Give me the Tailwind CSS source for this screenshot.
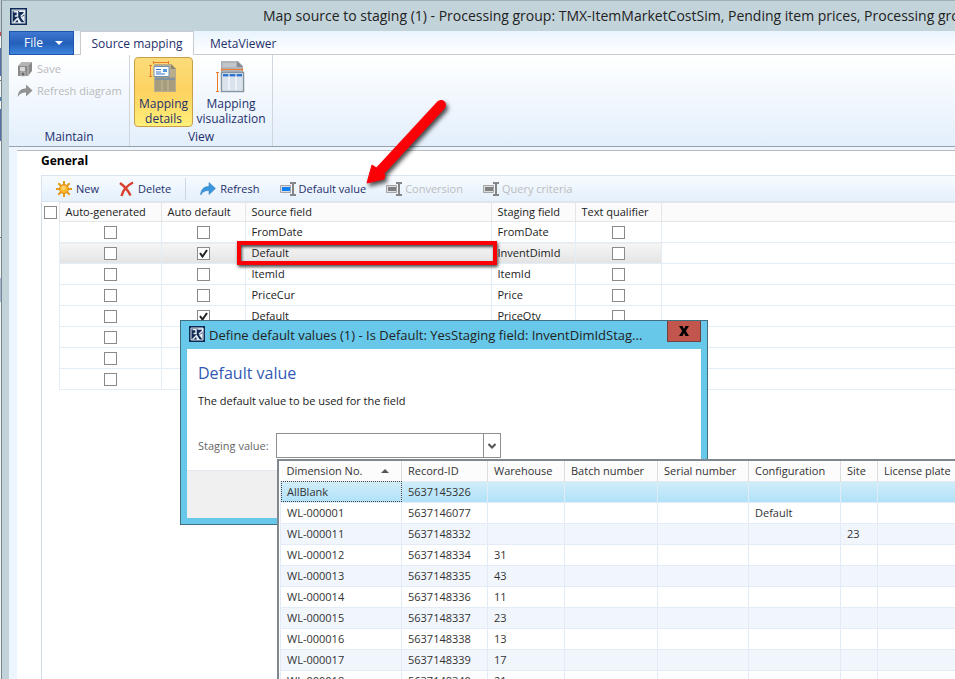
<!DOCTYPE html>
<html lang="en">
<head>
  <meta charset="UTF-8">
  <meta name="viewport" content="width=device-width, initial-scale=1.0">
  <title>Map source to staging (1)</title>
  <script src="https://cdn.jsdelivr.net/npm/@tailwindcss/browser@4"></script>
</head>
<body class="bg-white font-['Open_Sans','Noto_Sans',sans-serif] text-[11px] leading-4 text-[#222]">
  <!-- shared icons -->
  <svg class="hidden">
    <symbol id="appIcon" viewBox="0 0 16 16">
      <rect width="16" height="16" fill="#0f2a55"/>
      <path d="M2 2h12v12H2z" fill="#0f2a55" stroke="#dfe6ee"/>
      <path d="M3.500 3.500h3.500v4H4.500M8.500 3h5v2L10 8" fill="none" stroke="#e9eef4" stroke-width="1.500"/>
      <path d="M3 13l4.500-4.500L11 14H8L7 11l-3 3zM10 9l3.500-2v6.500z" fill="#e9eef4"/>
    </symbol>
    <symbol id="fieldIcon" viewBox="0 0 16 14">
      <path d="M.5 3.500h10v7H.5z" fill="#ddd" stroke="#a5a5a5"/>
      <path d="M2 5h8v4H2z" fill="currentColor"/>
      <path d="M10 1h2l1 1 1-1h2M13 2v10M10 13h2l1-1 1 1h2" fill="none" stroke="#858585" stroke-width="2"/>
    </symbol>
    <symbol id="turnArrow" viewBox="0 0 16 14">
      <path d="M.6 13C1 7 4 4.500 9 4.500V.5l6.500 6L9 12.500V8.600C5.500 8.500 3 9.500.6 13z"/>
    </symbol>
  </svg>

  <div class="relative flex h-screen overflow-hidden">
    <!-- edge of the window behind -->
    <div class="flex w-px shrink-0 flex-col bg-[#f4f4f4]">
      <div class="h-8 bg-[#c3cdd0]"></div>
      <div class="h-1 bg-[#c05060]"></div>
      <div class="h-3"></div>
      <div class="h-7 bg-[#5570ad]"></div>
      <div class="mt-1 h-px bg-[#777]"></div>
      <div class="mt-4 h-1 bg-[#4a7ab8]"></div>
      <div class="mt-2 h-8 bg-[#5570ad]"></div>
      <div class="mt-24 h-px bg-[#777]"></div>
      <div class="mt-10 h-6 bg-[#a9b5d0]"></div>
    </div>

    <div class="flex min-w-0 flex-1 flex-col border-t border-l border-t-[#9fb0b5] border-l-[#77888f] bg-[#c2d4da]">
      <!-- title bar -->
      <header class="flex h-[30px] shrink-0 items-center pl-2">
        <svg class="size-[17px] shrink-0"><use href="#appIcon"/></svg>
        <h1 class="ml-[236px] whitespace-nowrap text-sm">Map source to staging (1) - Processing group: TMX-ItemMarketCostSim, Pending item prices, Processing group</h1>
      </header>

      <div class="ml-[7px] flex min-h-0 flex-1 flex-col bg-[#edf5fe]">
        <!-- ribbon tabs -->
        <nav class="flex h-6 shrink-0 border-b border-[#c8ccd0] bg-linear-to-b from-[#e9f4fd] to-white text-xs text-[#1e2f6b]">
          <button class="flex h-6 w-[65px] items-center gap-3 border border-[#1f56ad] bg-linear-to-b from-[#3f78d0] via-[#2460bb] to-[#3d84dc] pl-3.5 text-white">File
            <svg class="h-1 w-2" viewBox="0 0 8 4"><path d="M0 0h8L4 4z" fill="#fff"/></svg>
          </button>
          <button class="ml-1.5 h-6 w-[114px] border-x border-t border-[#c8ccd0] bg-white pt-px">Source mapping</button>
          <button class="h-6 px-4 pt-0.5">MetaViewer</button>
        </nav>

        <!-- ribbon -->
        <div class="flex h-[92px] shrink-0 border-b border-[#98a0a8] bg-linear-to-b from-white to-[#e3effc] text-[#1e2f6b]">
          <section class="flex w-[121px] flex-col border-r border-[#cfd6de] pt-[3px]">
            <button disabled class="flex h-[22px] items-center gap-1 pl-2 text-[#b9b9b9]">
              <svg class="size-4" viewBox="0 0 16 16"><path d="M1 5l4-4h10v9l-4 5H1z" fill="#8a8a8a"/><path d="M5 1h10l-4 4H1z" fill="#b5b5b5"/><path d="M3 6h5v4H3z" fill="#d8d8d8"/><path d="M4 11h4v4H4zM11 5v10" fill="#666" stroke="#c5c5c5"/></svg>Save
            </button>
            <button disabled class="flex h-[22px] items-center gap-1 whitespace-nowrap pl-2 text-[#b9b9b9]">
              <svg class="h-3.5 w-4 shrink-0" fill="#929292"><use href="#turnArrow"/></svg>Refresh diagram
            </button>
            <h2 class="mt-auto pb-px text-center text-xs">Maintain</h2>
          </section>
          <section class="flex w-[143px] flex-col border-r border-[#cfd6de] pt-0.5">
            <div class="flex pl-1 text-xs leading-[15px]">
              <button class="flex h-[70px] w-[59px] flex-col items-center rounded-sm border border-[#c9a04a] bg-linear-to-b from-[#fbdc7a] via-[#fdd260] to-[#fff07a] pt-[3px] leading-[15px]">
                <svg class="mb-[3px] size-8 shrink-0" viewBox="0 0 32 32">
                  <path d="M6 3h17l5 5v23H6z" fill="#b9ad8c"/><path d="M23 3v5h5" fill="#8e876f"/>
                  <path d="M7 16h20v14H7z" fill="#a69d7e"/><path d="M7 17h20v2H7z" fill="#8192a0"/><path d="M14 19v11M20 19v11" stroke="#c4ba97"/>
                  <path d="M6 5.500h15v10H6z" fill="#fff" stroke="#6f90b5"/><path d="M15 8h4v3h-4z" fill="#5599e0"/><path d="M8 11h5M8 13h9M8 8.500h5" stroke="#2d74c8"/>
                  <path d="M5 1.500h16M5.500 0v3M20.500 0v3M2.500 4v12M1 4.500h3M1 15.500h3" stroke="#f07a30" fill="none"/>
                </svg>Mapping<br>details
              </button>
              <button class="flex h-[70px] w-[76px] flex-col items-center pt-1 leading-[15px]">
                <svg class="mb-[3px] size-8 shrink-0" viewBox="0 0 32 32">
                  <path d="M6 0h17l5 5v7H6z" fill="#aeb4b9"/><path d="M22 0v6h6" fill="#858b91"/><path d="M8 3h13M8 5h13" stroke="#d5d9dc"/>
                  <path d="M6.500 11.500h22v19h-22z" fill="#eaf0f5" stroke="#8795a3" stroke-width="1.500"/><path d="M8 13h19v2.500H8z" fill="#2e76cc"/><path d="M8 16h19v13H8z" fill="#dae3eb"/><path d="M14 13v16M21 13v16" stroke="#fff"/>
                  <path d="M6 8.500h22M6.500 7v3M27.500 7v3M2.500 11v19M1 11.500h3M1 30.500h3" stroke="#f07a30" fill="none"/>
                </svg>Mapping<br>visualization
              </button>
            </div>
            <h2 class="mt-auto pb-px text-center text-xs">View</h2>
          </section>
        </div>

        <main class="mt-[3px] ml-2 flex min-h-0 flex-1 flex-col border-t border-[#bbb] bg-white pl-6">
          <h2 class="h-6 shrink-0 text-xs leading-5 font-bold text-black">General</h2>

          <!-- grid toolbar -->
          <div class="flex h-[27px] shrink-0 items-center border-t border-b border-l border-[#dbe4f0] bg-linear-to-b from-[#f7fbff] to-[#e4f0fc] text-[#1e2f6b]">
            <button class="ml-3.5 flex items-center gap-1">
              <svg class="size-4" viewBox="0 0 16 16"><path d="M8 0v16M0 8h16M2.300 2.300l11.400 11.400M13.700 2.300L2.300 13.700" stroke="#e49a1c" stroke-width="2"/><circle cx="8" cy="8" r="4.500" fill="#fbb62c" stroke="#e08d12"/><circle cx="7.500" cy="7" r="2" fill="#ffd778"/></svg>New
            </button>
            <button class="ml-5 flex items-center gap-1">
              <svg class="h-4 w-[15px]" viewBox="0 0 15 16"><path d="M1 2c4 3 8 7 10.500 12.500M14 1.500C9 4 4 9 2.500 15" fill="none" stroke="#d8402c" stroke-width="2.500"/></svg>Delete
            </button>
            <div class="ml-3.5 h-[22px] w-px bg-[#ccd6e2]"></div>
            <button class="ml-3.5 flex items-center gap-1">
              <svg class="h-3.5 w-4" fill="#3b97dd" stroke="#2a77bd" stroke-width="0.5"><use href="#turnArrow"/></svg>Refresh
            </button>
            <button class="ml-5 flex items-center gap-[3px] whitespace-nowrap">
              <svg class="h-3.5 w-4 text-[#0a80f5]"><use href="#fieldIcon"/></svg>Default value
            </button>
            <button disabled class="ml-5 flex items-center gap-[3px] text-[#bcbcbc]">
              <svg class="h-3.5 w-4 text-[#808080]"><use href="#fieldIcon"/></svg>Conversion
            </button>
            <button disabled class="ml-5 flex items-center gap-[3px] whitespace-nowrap text-[#bcbcbc]">
              <svg class="h-3.5 w-4 text-[#808080]"><use href="#fieldIcon"/></svg>Query criteria
            </button>
          </div>

          <!-- mapping grid -->
          <div class="flex-1 border-l border-[#d0dcea]">
            <table class="w-full table-fixed border-collapse">
              <colgroup>
                <col class="w-[17px]"><col class="w-[102px]"><col class="w-[84px]"><col class="w-[246px]"><col class="w-[84px]"><col class="w-[86px]"><col>
              </colgroup>
              <thead>
                <tr class="h-[19px] bg-[#fbfbfb] text-left whitespace-nowrap">
                  <th class="bg-white p-0"><input type="checkbox" aria-label="Select all" class="mx-auto block size-[13px] appearance-none border border-[#8a8a8a] bg-white"></th>
                  <th class="border border-[#e6e6e6] p-0 pl-1.5 font-normal">Auto-generated</th>
                  <th class="border border-[#e6e6e6] p-0 pl-1.5 font-normal">Auto default</th>
                  <th class="border border-[#e6e6e6] p-0 pl-1.5 font-normal">Source field</th>
                  <th class="border border-[#e6e6e6] p-0 pl-1.5 font-normal">Staging field</th>
                  <th class="border border-[#e6e6e6] p-0 pl-1.5 font-normal">Text qualifier</th>
                  <th class="border-y border-[#e6e6e6] p-0"></th>
                </tr>
              </thead>
              <tbody id="mappingBody"></tbody>
            </table>
          </div>
        </main>
      </div>
    </div>

    <!-- callouts on the grid -->
    <div class="absolute top-[241px] left-[237px] h-6 w-[260px] border-4 border-[#fb0007] shadow-[1px_2px_3px_rgba(0,0,0,0.7),inset_1px_2px_3px_rgba(0,0,0,0.7)]"></div>
    <svg class="absolute top-[95px] left-[360px] h-[95px] w-[95px] drop-shadow-[2px_3px_2px_rgba(0,0,0,0.7)]" viewBox="0 0 95 95">
      <path d="M81 10L20 76" stroke="#fb0007" stroke-width="10" stroke-linecap="round"/>
      <path d="M7 88L12 70L15 72L25 80L24 84z" fill="#fb0007" stroke="#fb0007" stroke-linejoin="round"/>
    </svg>

    <!-- default value dialog -->
    <section class="absolute top-[320px] left-[180px] flex h-[205px] w-[528px] flex-col border border-[#3f6f80] bg-[#67c8ea] px-1.5 pb-1.5">
      <header class="flex h-7 shrink-0 pl-0.5">
        <svg class="mt-[5px] size-4 shrink-0"><use href="#appIcon"/></svg>
        <h2 class="ml-1 flex-1 pt-1 text-[13px] leading-5 whitespace-nowrap">Define default values (1) - Is Default: YesStaging field: InventDimIdStag...</h2>
        <button aria-label="Close" class="grid h-[21px] w-[34px] shrink-0 place-items-center border border-t-0 border-[#6d4340] bg-[#c2564d]">
          <svg class="size-2.5" viewBox="0 0 10 10"><path d="M0 0h3.500L5 3 6.500 0H10L6.800 5 10 10H6.500L5 7 3.500 10H0l3.200-5z"/></svg>
        </button>
      </header>
      <div class="flex flex-1 flex-col bg-white pl-[11px]">
        <h3 class="mt-3 text-base leading-6 text-[#3259b5]">Default value</h3>
        <p class="mt-2 leading-4">The default value to be used for the field</p>
        <div class="mt-6 flex items-center text-[#666]">
          <label for="stagingValue" class="w-[78px] shrink-0 whitespace-nowrap">Staging value:</label>
          <div class="relative flex h-[25px] w-[225px] border border-[#8f8f8f] bg-white">
            <input type="text" id="stagingValue" class="min-w-0 flex-1 px-1 outline-none">
            <button aria-label="Open lookup" class="grid w-[17px] place-items-center border-l border-[#8f8f8f]">
              <svg class="h-1.5 w-2" viewBox="0 0 8 6"><path d="M.5 1L4 4.500 7.500 1" fill="none" stroke="#555" stroke-width="2"/></svg>
            </button>

            <!-- dimension lookup -->
            <div class="absolute top-[25px] left-0 border-2 border-[#7f8790] bg-white pl-px text-[#333]">
              <table class="w-[760px] table-fixed border-collapse">
                <colgroup>
                  <col class="w-[121px]"><col class="w-[86px]"><col class="w-[77px]"><col class="w-[93px]"><col class="w-[91px]"><col class="w-[92px]"><col class="w-[37px]"><col>
                </colgroup>
                <thead>
                  <tr class="h-5 bg-[#fcfcfc] text-left whitespace-nowrap">
                    <th class="border-r border-[#dedede] p-0 pl-1.5 font-normal">
                      <span class="flex items-center justify-between pr-3">Dimension No. <svg class="h-1 w-2" viewBox="0 0 8 4"><path d="M4 0l4 4H0z" fill="#555"/></svg></span>
                    </th>
                    <th class="border-r border-[#dedede] p-0 pl-1.5 font-normal">Record-ID</th>
                    <th class="border-r border-[#dedede] p-0 pl-1.5 font-normal">Warehouse</th>
                    <th class="border-r border-[#dedede] p-0 pl-1.5 font-normal">Batch number</th>
                    <th class="border-r border-[#dedede] p-0 pl-1.5 font-normal">Serial number</th>
                    <th class="border-r border-[#dedede] p-0 pl-1.5 font-normal">Configuration</th>
                    <th class="border-r border-[#dedede] p-0 pl-1.5 font-normal">Site</th>
                    <th class="p-0 pl-1.5 font-normal">License plate</th>
                  </tr>
                </thead>
                <tbody id="lookupBody"></tbody>
              </table>
            </div>
          </div>
        </div>
        <footer class="mt-auto -ml-[11px] h-12 border-t border-[#e2e8ee] bg-[#f0f0f0]"></footer>
      </div>
    </section>
  </div>

  <script>
    // auto default, source field, staging field, selected
    const mappings = [
      [false, 'FromDate', 'FromDate'],
      [true, 'Default', 'InventDimId', true],
      [false, 'ItemId', 'ItemId'],
      [false, 'PriceCur', 'Price'],
      [true, 'Default', 'PriceQty'],
      [false, '', ''],
      [false, '', ''],
      [false, '', ''],
    ];

    const dimensions = [
      ['AllBlank', '5637145326', '', '', '', '', '', ''],
      ['WL-000001', '5637146077', '', '', '', 'Default', '', ''],
      ['WL-000011', '5637148332', '', '', '', '', '23', ''],
      ['WL-000012', '5637148334', '31', '', '', '', '', ''],
      ['WL-000013', '5637148335', '43', '', '', '', '', ''],
      ['WL-000014', '5637148336', '11', '', '', '', '', ''],
      ['WL-000015', '5637148337', '23', '', '', '', '', ''],
      ['WL-000016', '5637148338', '13', '', '', '', '', ''],
      ['WL-000017', '5637148339', '17', '', '', '', '', ''],
      ['WL-000018', '5637148340', '21', '', '', '', '', ''],
    ];

    function checkbox(label, checked) {
      return `<label class="relative mx-auto block size-[13px]">
        <input type="checkbox" aria-label="${label}" ${checked ? 'checked' : ''} class="peer block size-[13px] appearance-none border border-[#8a8a8a] bg-white">
        <svg class="absolute inset-0 hidden size-[13px] peer-checked:block" viewBox="0 0 13 13"><path d="M3 6l2.500 3.500L10 3" fill="none" stroke="#222" stroke-width="2"/></svg>
      </label>`;
    }

    const cell = 'border border-[#e3edf8] p-0';
    const textCell = 'border border-[#e3edf8] p-0 pl-1.5';

    document.getElementById('mappingBody').innerHTML = mappings.map(([auto, source, staging, selected]) => {
      const fill = selected ? 'bg-linear-to-b from-[#f6f6f6] to-[#e3e3e3]' : '';
      return `
      <tr class="h-[21px]">
        <td class="p-0"></td>
        <td class="${cell} ${fill}">${checkbox('Auto-generated', false)}</td>
        <td class="${cell} ${fill}">${checkbox('Auto default', auto)}</td>
        <td class="${textCell} ${fill}">${source}</td>
        <td class="${textCell} ${fill}">${staging}</td>
        <td class="${cell} ${fill}">${checkbox('Text qualifier', false)}</td>
        <td class="border-y border-[#e3edf8] p-0"></td>
      </tr>`;
    }).join('');

    document.getElementById('lookupBody').innerHTML = dimensions.map((row, i) => `
      <tr class="h-[21px] ${i === 0 ? 'bg-linear-to-b from-[#d3edf9] to-[#b0e2f9]' : 'even:bg-white odd:bg-[#f1f6fd]'}">
        ${row.map((value, j) => `<td class="border border-[#e3ecf6] p-0 pl-1.5 ${i === 0 && j === 0 ? 'outline outline-dotted -outline-offset-1 outline-[#444]' : ''}">${value}</td>`).join('')}
      </tr>`).join('');
  </script>
</body>
</html>
